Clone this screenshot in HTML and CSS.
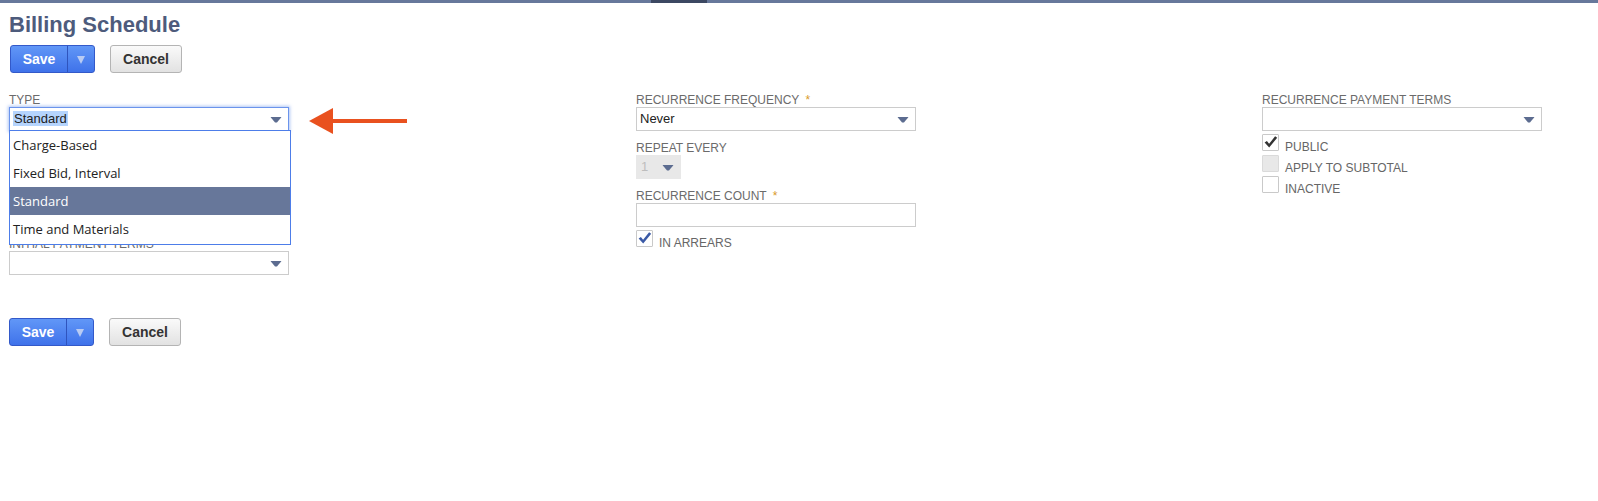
FILE: index.html
```html
<!DOCTYPE html>
<html lang="en">
<head>
<meta charset="utf-8">
<title>Billing Schedule</title>
<link rel="stylesheet" href="styles.css">
</head>
<body>
<div class="topbar"><div class="topbar-seg"></div></div>
<div class="page">
  <h1 class="title">Billing Schedule</h1>
  <div class="btnbar">
    <div class="btn-split">
      <button class="btn-save" type="button">Save</button>
      <button class="btn-more" type="button"><span class="more-tri"></span></button>
    </div>
    <button class="btn-cancel" type="button">Cancel</button>
  </div>

  <div class="form">
    <div class="col">
      <div class="field type-field">
        <div class="lbl">TYPE</div>
        <div class="select focus"><span class="val"><span class="hl">Standard</span></span><span class="caret"></span></div>
        <ul class="dropdown">
          <li class="opt">Charge-Based</li>
          <li class="opt">Fixed Bid, Interval</li>
          <li class="opt active">Standard</li>
          <li class="opt">Time and Materials</li>
        </ul>
        <svg class="annot-arrow" width="104" height="28" viewBox="0 0 104 28">
          <polygon points="4,14 28,1 28,27" fill="#e9511f"/>
          <rect x="27" y="12" width="75" height="4" fill="#e9511f"/>
        </svg>
      </div>
      <div class="field-gap"></div>
      <div class="field">
        <div class="lbl">INITIAL PAYMENT TERMS</div>
        <div class="select"><span class="val"></span><span class="caret"></span></div>
      </div>
    </div>

    <div class="col">
      <div class="field">
        <div class="lbl">RECURRENCE FREQUENCY <span class="req">*</span></div>
        <div class="select"><span class="val">Never</span><span class="caret"></span></div>
      </div>
      <div class="field">
        <div class="lbl">REPEAT EVERY</div>
        <div class="select small disabled"><span class="val">1</span><span class="caret"></span></div>
      </div>
      <div class="field">
        <div class="lbl">RECURRENCE COUNT <span class="req">*</span></div>
        <div class="textinput"></div>
      </div>
      <div class="checks">
        <div class="check-row">
          <span class="box"><svg class="tick" width="17" height="17" viewBox="0 0 17 17"><path d="M2.6 8.6 L4.9 6.9 L7.1 9.8 L13.1 2.2 L15.2 3.8 L7.2 13.4 Z" fill="#3b5aa6"/></svg></span>
          <span class="ctext">IN ARREARS</span>
        </div>
      </div>
    </div>

    <div class="col">
      <div class="field">
        <div class="lbl">RECURRENCE PAYMENT TERMS</div>
        <div class="select"><span class="val"></span><span class="caret"></span></div>
      </div>
      <div class="checks">
        <div class="check-row">
          <span class="box"><svg class="tick" width="17" height="17" viewBox="0 0 17 17"><path d="M2.6 8.6 L4.9 6.9 L7.1 9.8 L13.1 2.2 L15.2 3.8 L7.2 13.4 Z" fill="#333333"/></svg></span>
          <span class="ctext">PUBLIC</span>
        </div>
        <div class="check-row">
          <span class="box disabled"></span>
          <span class="ctext">APPLY TO SUBTOTAL</span>
        </div>
        <div class="check-row">
          <span class="box"></span>
          <span class="ctext">INACTIVE</span>
        </div>
      </div>
    </div>
  </div>

  <div class="btnbar bottom">
    <div class="btn-split">
      <button class="btn-save" type="button">Save</button>
      <button class="btn-more" type="button"><span class="more-tri"></span></button>
    </div>
    <button class="btn-cancel" type="button">Cancel</button>
  </div>
</div>
</body>
</html>
```
FILE: styles.css
```css
* { box-sizing: border-box; }
html, body { margin: 0; padding: 0; background: #ffffff; }
body {
  font-family: "Liberation Sans", Arial, Helvetica, sans-serif;
  color: #333;
}
.topbar {
  height: 3px;
  background: #67789b;
}
.topbar-seg {
  margin-left: 651px;
  width: 56px;
  height: 3px;
  background: #3c4862;
}
.page {
  padding-left: 9px;
}
.title {
  margin: 9px 0 0 0;
  font-size: 22px;
  line-height: 26px;
  font-weight: bold;
  color: #4d5b7c;
}
.btnbar {
  display: flex;
  align-items: center;
  gap: 15px;
  margin-top: 7px;
  margin-left: 1px;
}
.btnbar.bottom {
  margin-top: 35px;
  margin-left: 0;
}
.btn-split {
  display: flex;
  height: 28px;
  width: 85px;
  border: 1px solid #3359c9;
  border-radius: 3px;
  overflow: hidden;
  background: linear-gradient(#6197f7, #3f72ea);
}
.btn-save, .btn-more, .btn-cancel {
  font-family: "Liberation Sans", Arial, Helvetica, sans-serif;
  font-weight: bold;
  font-size: 14px;
  margin: 0;
  padding: 0;
  cursor: pointer;
}
.btn-save {
  width: 57px;
  height: 100%;
  border: none;
  background: transparent;
  color: #ffffff;
  border-right: 1px solid #2f54bd;
}
.btn-more {
  flex: 1;
  height: 100%;
  border: none;
  background: transparent;
  display: flex;
  align-items: center;
  justify-content: center;
}
.more-tri {
  width: 0;
  height: 0;
  border-left: 4.5px solid transparent;
  border-right: 4.5px solid transparent;
  border-top: 8px solid #b9cbf3;
  margin-top: 1px;
}
.btn-cancel {
  height: 28px;
  width: 72px;
  border: 1px solid #b4b4b4;
  border-radius: 3px;
  background: linear-gradient(#fafafa, #e2e2e2);
  color: #333;
}
.form {
  display: grid;
  grid-template-columns: 627px 626px 1fr;
  margin-top: 18px;
}
.col {
  display: flex;
  flex-direction: column;
}
.field {
  position: relative;
  margin-bottom: 8px;
}
.field-gap {
  height: 96px;
}
.lbl {
  height: 16px;
  font-size: 12px;
  line-height: 14px;
  padding-top: 2px;
  color: #6b6b6b;
  white-space: nowrap;
}
.req {
  color: #d99a2a;
  font-size: 12px;
  margin-left: 3px;
}
.select {
  width: 280px;
  height: 24px;
  border: 1px solid #cccccc;
  background: #ffffff;
  display: flex;
  align-items: center;
  justify-content: space-between;
  padding: 0 6px 0 3px;
}
.select.focus {
  border-color: #6b94ec;
  box-shadow: 0 0 3px 1px rgba(110, 150, 235, 0.55);
}
.val {
  font-size: 13px;
  color: #222;
  line-height: 16px;
}
.hl {
  background: #b5d4fd;
  padding: 0 1px;
}
.caret {
  width: 12px;
  height: 6px;
  background: #5c6c90;
  clip-path: polygon(0 0, 100% 0, 58% 100%, 42% 100%);
  border-radius: 1px;
  margin-top: 1px;
}
.select.small {
  width: 45px;
  border-color: #e8e8e8;
  background: #e8e8e8;
  padding-left: 4px;
}
.select.disabled .val { color: #bdbdbd; }
.textinput {
  width: 280px;
  height: 24px;
  border: 1px solid #cccccc;
  background: #ffffff;
}
.dropdown {
  position: absolute;
  left: 0;
  top: 39px;
  width: 282px;
  margin: 0;
  padding: 0 0 1px 0;
  list-style: none;
  background: #ffffff;
  border: 1px solid #4d7de9;
  z-index: 5;
}
.opt {
  height: 28px;
  line-height: 29px;
  padding-left: 3px;
  font-family: "Open Sans", "Liberation Sans", Arial, sans-serif;
  font-size: 13px;
  color: #222;
}
.opt.active {
  background: #67779a;
  color: #ffffff;
}
.annot-arrow {
  position: absolute;
  left: 296px;
  top: 16px;
}
.checks {
  display: flex;
  flex-direction: column;
  gap: 4px;
  margin-top: -5px;
}
.check-row {
  display: flex;
  align-items: flex-end;
  height: 17px;
}
.box {
  width: 17px;
  height: 17px;
  border: 1px solid #c9c9c9;
  border-radius: 1px;
  background: #ffffff;
  flex: none;
  position: relative;
}
.box.disabled {
  background: #e8e8e8;
  border-color: #dadada;
}
.tick {
  position: absolute;
  left: -1px;
  top: -1px;
}
.ctext {
  font-size: 12px;
  line-height: 12px;
  color: #666;
  margin-left: 6px;
  margin-bottom: -2px;
}
```
